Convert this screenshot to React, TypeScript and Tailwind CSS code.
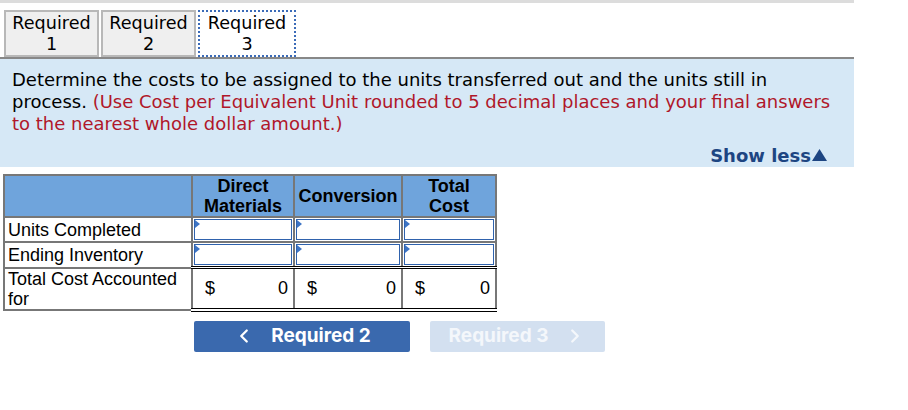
import { ChevronLeft, ChevronRight } from "lucide-react";

const tabs = [
  { n: "1", active: false },
  { n: "2", active: false },
  { n: "3", active: true },
];

function AnswerInput() {
  return (
    <div className="relative h-[21px] w-full border-[1.5px] border-[#2f62ad] bg-white">
      <span className="absolute left-0 top-0 h-0 w-0 border-b-[4px] border-l-[5px] border-t-[4px] border-b-transparent border-l-[#3d74c4] border-t-transparent" />
    </div>
  );
}

function TotalCell() {
  return (
    <td className="border-x-2 border-x-[#777] border-t-[3px] border-t-black border-b-[4px] border-b-black border-double px-0 py-0">
      <div className="flex items-center justify-between pl-[12px] pr-[5px]">
        <span>$</span>
        <span>0</span>
      </div>
    </td>
  );
}

export default function App() {
  return (
    <div className="h-[410px] w-[908px] bg-white text-black">
      <div className="w-[854px]">
        <div className="h-[3px] bg-[#dcdcdc]" />
        <div className="flex gap-[2px] border-b-[2px] border-[#888] pl-[4px] pt-[7px] font-['DejaVu_Sans',sans-serif] text-[17.6px] leading-[21px]">
          {tabs.map((t) => (
            <div
              key={t.n}
              className={`flex h-[47px] flex-col items-center justify-center border-2 ${
                t.active
                  ? "w-[98px] border-dotted border-[#3b6bb8] bg-white"
                  : "w-[95px] border-[#b8b8b8] bg-[#efefef]"
              }`}
            >
              <span>Required</span>
              <span>{t.n}</span>
            </div>
          ))}
        </div>
        <div className="bg-[#d6e8f6] px-[12px] pt-[10px] font-['DejaVu_Sans',sans-serif] text-[18px] leading-[22px]">
          <p className="w-[826px]">
            Determine the costs to be assigned to the units transferred out and the units still in process.{" "}
            <span className="text-[#b0172a]">
              (Use Cost per Equivalent Unit rounded to 5 decimal places and your final answers to the nearest whole dollar
              amount.)
            </span>
          </p>
          <div className="-mr-[12px] flex h-[32px] items-center justify-end gap-[1px] pr-[27px] pt-[10px]">
            <span className="font-bold text-[#1d4582]">Show less</span>
            <svg width="15" height="12" viewBox="0 0 15 12" className="mb-[2px]">
              <polygon points="7.5,0 15,12 0,12" fill="#1d4582" />
            </svg>
          </div>
        </div>
      </div>

      <table className="ml-[3px] mt-[7px] border-collapse font-['Liberation_Sans',Arial,sans-serif] text-[18px] leading-[20px]">
        <thead>
          <tr className="h-[42px] bg-[#6fa4dc] font-bold">
            <th className="w-[188px] border-2 border-[#777]" />
            <th className="w-[102px] border-2 border-[#777]">
              Direct
              <br />
              Materials
            </th>
            <th className="w-[108px] border-2 border-[#777]">Conversion</th>
            <th className="w-[94px] border-2 border-[#777]">
              Total
              <br />
              Cost
            </th>
          </tr>
        </thead>
        <tbody>
          {["Units Completed", "Ending Inventory"].map((label) => (
            <tr key={label} className="h-[24px]">
              <td className="border-2 border-[#777] py-0 pl-[3px] text-left">{label}</td>
              <td className="border-2 border-[#777] p-[1px]">
                <AnswerInput />
              </td>
              <td className="border-2 border-[#777] p-[1px]">
                <AnswerInput />
              </td>
              <td className="border-2 border-[#777] p-[1px]">
                <AnswerInput />
              </td>
            </tr>
          ))}
          <tr className="h-[41px]">
            <td className="border-2 border-[#777] py-0 pl-[3px] pr-[4px] text-left">Total Cost Accounted for</td>
            <TotalCell />
            <TotalCell />
            <TotalCell />
          </tr>
        </tbody>
      </table>

      <div className="ml-[194px] mt-[9px] flex gap-[20px] font-['Inter',sans-serif] text-[19px] font-bold">
        <button className="flex h-[31px] w-[216px] items-center justify-center gap-[16px] rounded-[2px] bg-[#3a69ae] text-white">
          <ChevronLeft size={22} strokeWidth={2.5} />
          <span>Required 2</span>
        </button>
        <button className="flex h-[31px] w-[175px] items-center justify-center gap-[16px] rounded-[2px] bg-[#d3e0f0] text-[#f4f7fb]">
          <span>Required 3</span>
          <ChevronRight size={22} strokeWidth={2.5} />
        </button>
      </div>
    </div>
  );
}
